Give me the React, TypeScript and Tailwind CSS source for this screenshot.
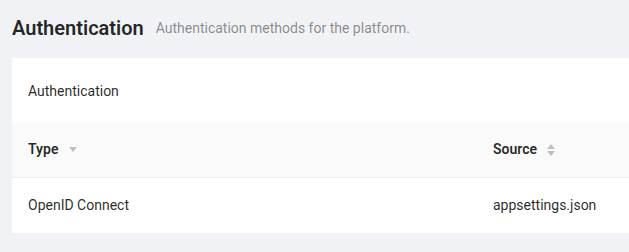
import React from 'react';

const SortDown = () => (
  <svg width="8" height="6" viewBox="0 0 8 6" className="ml-[11px]">
    <path d="M0 0 L8 0 L4 5 Z" fill="#bfbfbf" />
  </svg>
);

const SortBoth = () => (
  <svg width="8" height="12" viewBox="0 0 8 12" className="ml-[10px]">
    <path d="M4 0 L8 5 L0 5 Z" fill="#bfbfbf" />
    <path d="M0 7 L8 7 L4 12 Z" fill="#bfbfbf" />
  </svg>
);

export default function App() {
  return (
    <div
      className="min-h-screen w-full overflow-hidden bg-[#f0f2f5] px-3 text-[14px] text-[rgba(0,0,0,0.85)]"
      style={{ fontFamily: '"Segoe UI", Roboto, "Noto Sans", sans-serif' }}
    >
      {/* page header */}
      <div className="flex h-[58px] items-center gap-3 pb-[2px]">
        <h1 className="text-[20px] font-semibold leading-[28px] text-[rgba(0,0,0,0.85)]">Authentication</h1>
        <span className="text-[14px] leading-[22px] text-[rgba(0,0,0,0.45)]">
          Authentication methods for the platform.
        </span>
      </div>

      {/* card */}
      <div className="w-[700px] bg-white">
        <div className="flex h-[65px] items-center px-4 leading-[22px]">Authentication</div>
        <table className="w-full border-collapse">
          <thead>
            <tr className="bg-[#fafafa]">
              <th className="h-[54px] w-[465px] border-b border-[#f0f0f0] px-4 text-left font-semibold">
                <div className="flex items-center">
                  Type
                  <SortDown />
                </div>
              </th>
              <th className="h-[54px] border-b border-[#f0f0f0] px-4 text-left font-semibold">
                <div className="flex items-center">
                  Source
                  <SortBoth />
                </div>
              </th>
            </tr>
          </thead>
          <tbody>
            <tr>
              <td className="h-[56px] px-4">OpenID Connect</td>
              <td className="h-[56px] px-4">appsettings.json</td>
            </tr>
          </tbody>
        </table>
      </div>
    </div>
  );
}
